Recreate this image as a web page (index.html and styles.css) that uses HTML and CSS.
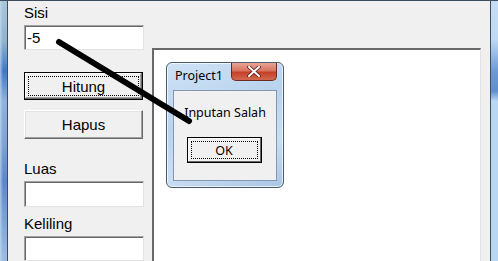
FILE: index.html
```html
<!DOCTYPE html>
<html lang="en">
<head>
  <meta charset="UTF-8">
  <meta name="viewport" content="width=device-width, initial-scale=1.0">
  <title>Project1</title>
  <link rel="stylesheet" href="styles.css">
</head>
<body>
  <div class="window">
    <div class="frame frame-left"></div>
    <div class="client">
      <div class="controls">
        <label class="caption" for="sisi">Sisi</label>
        <input class="field" type="text" id="sisi" value="-5">

        <button class="btn btn-default" type="button"><span class="focus">Hitung</span></button>
        <button class="btn btn-hapus" type="button">Hapus</button>

        <label class="caption caption-luas" for="luas">Luas</label>
        <input class="field" type="text" id="luas">

        <label class="caption caption-keliling" for="keliling">Keliling</label>
        <input class="field" type="text" id="keliling">
      </div>

      <div class="picture">
        <div class="dialog">
          <div class="dialog-title">
            <span>Project1</span>
            <span class="close">
              <svg width="14" height="11" viewBox="0 0 14 11">
                <path d="M2 1 L12 10 M12 1 L2 10" stroke="#5a1a14" stroke-width="3.6" stroke-linecap="round"/>
                <path d="M2 1 L12 10 M12 1 L2 10" stroke="#ffffff" stroke-width="2" stroke-linecap="round"/>
              </svg>
            </span>
          </div>
          <div class="dialog-body">
            <p class="message">Inputan Salah</p>
            <button class="btn btn-ok" type="button"><span class="focus">OK</span></button>
          </div>
        </div>
      </div>
    </div>
    <div class="frame frame-right"></div>

    <svg class="pointer" width="498" height="261" viewBox="0 0 498 261">
      <line x1="59" y1="42" x2="189" y2="121" stroke="#000" stroke-width="6" stroke-linecap="round"/>
    </svg>
  </div>
</body>
</html>
```

FILE: styles.css
```css
body {
  margin: 0;
  padding: 0;
  background-color: #f0f0f0;
  overflow: hidden;
}

.window {
  position: relative;
  display: flex;
  width: 498px;
  height: 261px;
  border-top: 1px solid #3f4e60;
  box-sizing: border-box;
  overflow: hidden;
}

.frame {
  width: 8px;
  flex: none;
}

.frame-left {
  background:
    linear-gradient(to right, rgba(200, 220, 240, 0.7) 0, rgba(200, 220, 240, 0) 3px, rgba(0, 0, 0, 0) 7px, #3d4d60 7px),
    linear-gradient(to bottom, #a8c6dc 0, #8fb4cf 40px, #3e78c8 70px, #8db2dd 100px, #7ea3d6 140px, #5c86cc 180px, #7da4d8 220px, #9cbde4 261px);
}

.frame-right {
  background:
    linear-gradient(to right, #3d4d60 0, #3d4d60 1px, rgba(0, 0, 0, 0) 1px),
    linear-gradient(to bottom, #c6def5 0, #c0daf3 38px, #6d9ad6 70px, #5f8fd0 90px, #b9d6f2 100px, #b9d6f2 261px);
}

.client {
  flex: 1;
  display: flex;
  background-color: #f0f0f0;
}

.controls {
  display: flex;
  flex-direction: column;
  align-items: flex-start;
  width: 120px;
  padding-left: 16px;
  padding-right: 8px;
  flex: none;
}

.caption {
  font-family: "Liberation Sans", Arial, sans-serif;
  font-size: 15px;
  line-height: 18px;
  color: #000;
  height: 18px;
  margin-top: 3px;
  margin-bottom: 3px;
}

.caption-luas {
  margin-top: 21px;
}

.caption-keliling {
  margin-top: 8px;
}

.field {
  width: 120px;
  height: 27px;
  box-sizing: border-box;
  border: 1px solid;
  border-color: #a0a0a0 #e3e3e3 #e3e3e3 #a0a0a0;
  box-shadow: inset 1px 1px 0 #696969;
  background-color: #fff;
  padding: 0 0 0 2px;
  font-family: "Liberation Sans", Arial, sans-serif;
  font-size: 15px;
  color: #000;
  outline: none;
}

.btn {
  font-family: "Liberation Sans", Arial, sans-serif;
  font-size: 15px;
  color: #000;
  background-color: #f0f0f0;
  border: 1px solid;
  border-color: #ffffff #696969 #696969 #ffffff;
  box-shadow: inset -1px -1px 0 #a0a0a0, inset 1px 1px 0 #e3e3e3;
  padding: 0;
  cursor: pointer;
}

.btn-default {
  width: 119px;
  height: 29px;
  margin-top: 22px;
  border: 1px solid #000;
  box-shadow: inset -1px -1px 0 #696969, inset 1px 1px 0 #ffffff, inset -2px -2px 0 #a0a0a0;
  padding: 3px;
}

.focus {
  display: flex;
  align-items: center;
  justify-content: center;
  height: 100%;
  box-sizing: border-box;
  border: 1px dotted #000;
}

.btn-hapus {
  width: 119px;
  height: 31px;
  margin-top: 10px;
}

.picture {
  position: relative;
  width: 329px;
  height: 213px;
  margin-top: 47px;
  box-sizing: border-box;
  border-top: 2px solid #696969;
  border-left: 2px solid #696969;
  border-right: 1px solid #e3e3e3;
  background-color: #fff;
}

.dialog {
  position: absolute;
  left: 12px;
  top: 12px;
  width: 118px;
  height: 126px;
  box-sizing: border-box;
  border: 1px solid #4a5a6c;
  border-radius: 6px;
  background: linear-gradient(160deg, #cfe2f5 0, #b9d3ee 40%, #c9def3 70%, #a9c6e6 100%);
  box-shadow: inset 0 0 0 1px rgba(255, 255, 255, 0.7);
  display: flex;
  flex-direction: column;
  padding: 0 6px 6px 6px;
}

.dialog-title {
  display: flex;
  justify-content: space-between;
  align-items: flex-start;
  height: 27px;
  font-family: "Noto Sans", "DejaVu Sans", sans-serif;
  font-size: 12.5px;
  color: #000;
}

.dialog-title span:first-child {
  padding-top: 4px;
  padding-left: 2px;
}

.close {
  display: flex;
  align-items: center;
  justify-content: center;
  width: 46px;
  height: 18px;
  box-sizing: border-box;
  border: 1px solid #6c2a24;
  border-top: none;
  border-radius: 0 0 5px 5px;
  background: linear-gradient(to bottom, #e8a597 0, #d8735f 45%, #c5402a 55%, #d26a4f 100%);
}

.dialog-body {
  flex: 1;
  display: flex;
  flex-direction: column;
  align-items: center;
  background-color: #f0f0f0;
  border: 1px solid #8398b0;
}

.message {
  margin: 14px 0 0 0;
  font-family: "Noto Sans", "DejaVu Sans", sans-serif;
  font-size: 12.5px;
  line-height: 16px;
  color: #000;
}

.btn-ok {
  width: 75px;
  height: 26px;
  margin-top: 16px;
  margin-right: 2px;
  border: 1px solid #000;
  box-shadow: inset -1px -1px 0 #696969, inset 1px 1px 0 #ffffff;
  padding: 3px;
  font-family: "Noto Sans", "DejaVu Sans", sans-serif;
  font-size: 12.5px;
}

.pointer {
  position: absolute;
  left: 0;
  top: -1px;
  pointer-events: none;
}
```
